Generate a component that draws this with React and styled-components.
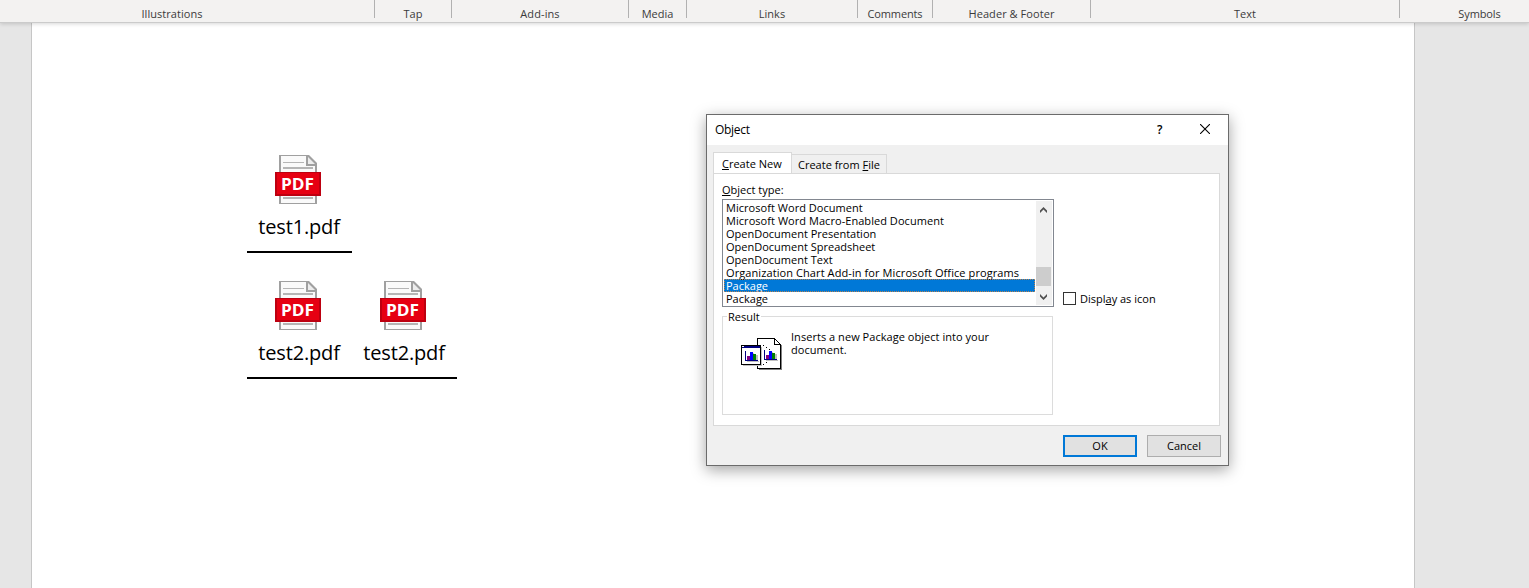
import styled, { createGlobalStyle } from 'styled-components';

const GlobalStyle = createGlobalStyle`
    * {
        box-sizing: border-box;
    }

    body {
        margin: 0;
        overflow: hidden;
        font-family: 'Open Sans', 'Noto Sans', sans-serif;
        font-size: 11px;
        color: #000;
    }
`;

const Window = styled.div`
    position: relative;
    display: flex;
    flex-direction: column;
    width: 100%;
    height: 100vh;
    overflow: hidden;
    background: #e6e6e6;
`;

/* ---------- ribbon ---------- */

const Ribbon = styled.header`
    position: relative;
    z-index: 1;
    display: flex;
    flex: none;
    height: 23px;
    background: #f3f2f1;
    border-bottom: 1px solid #cbcbcb;
    box-shadow: 0 1px 4px rgba(0, 0, 0, 0.16);
`;

const Group = styled.div`
    flex: none;
    width: ${({ $width }) => $width}px;
    height: 18px;
    padding-right: ${({ $inset = 0 }) => $inset}px;
    border-right: 1px solid #b1b1b1;
    color: #3b3b3b;
    line-height: 28px;
    text-align: center;
    white-space: nowrap;
    letter-spacing: ${({ $spacing = 0 }) => $spacing}px;
`;

/* ---------- document ---------- */

const Page = styled.main`
    flex: 1;
    width: 1384px;
    margin-left: 31px;
    padding: 124px 0 0 215px;
    background: #fff;
    border: solid #c6c6c6;
    border-width: 0 1px;
`;

const FileRow = styled.div`
    display: flex;
    width: fit-content;
    height: 106px;
    margin-bottom: 20px;
    border-bottom: 2px solid #000;
`;

const File = styled.figure`
    display: flex;
    flex-direction: column;
    align-items: center;
    width: 105px;
    margin: 0;
    padding: 8px 3px 0 0;
`;

const FileName = styled.figcaption`
    margin: 9px -2px 0 0;
    font-size: 20px;
    line-height: 28px;
    letter-spacing: -0.15px;
`;

const BandText = styled.text`
    fill: #fff;
    font: 700 16px 'Open Sans', sans-serif;
`;

/* ---------- dialog ---------- */

const Dialog = styled.section`
    position: absolute;
    z-index: 2;
    top: 114px;
    left: 706px;
    display: flex;
    flex-direction: column;
    width: 523px;
    height: 352px;
    background: #f0f0f0;
    border: 1px solid #6b6b6b;
    box-shadow: 0 4px 14px rgba(0, 0, 0, 0.36);
`;

const TitleBar = styled.div`
    display: flex;
    align-items: center;
    height: 30px;
    padding: 0 18px 2px 8px;
    background: #fff;
    font-size: 12px;
`;

const Title = styled.span`
    flex: 1;
    letter-spacing: -0.3px;
`;

const Help = styled.span`
    width: 6px;
    margin-right: 37px;
    font-weight: 600;
`;

const Tabs = styled.div`
    display: flex;
    align-items: flex-end;
    height: 28px;
    margin-left: 6px;
`;

const Tab = styled.div`
    width: ${({ $active }) => ($active ? 79 : 95)}px;
    height: ${({ $active }) => ($active ? 22 : 19)}px;
    margin-bottom: ${({ $active }) => ($active ? -1 : 0)}px;
    padding-left: ${({ $active }) => ($active ? 8 : 6)}px;
    background: ${({ $active }) => ($active ? '#fff' : '#f0f0f0')};
    border: 1px solid #d9d9d9;
    border-width: ${({ $active }) => ($active ? '1px 1px 0' : '1px 1px 0 0')};
    line-height: ${({ $active }) => ($active ? 22 : 20)}px;
    white-space: nowrap;
`;

const Panel = styled.div`
    display: flex;
    width: 507px;
    height: 253px;
    margin-left: 6px;
    padding: 9px 0 0 8px;
    background: #fff;
    border: 1px solid #d9d9d9;
`;

const Column = styled.div`
    width: 332px;
`;

const Line = styled.div`
    height: 16px;
    line-height: 14px;
`;

const ListBox = styled.div`
    display: flex;
    height: 108px;
    padding: 1px;
    border: 1px solid #828790;
`;

const Options = styled.ul`
    width: 311px;
    margin: 0;
    padding: 0;
    list-style: none;
`;

const Option = styled.li`
    height: 13px;
    padding-left: 2px;
    line-height: 14px;
    white-space: nowrap;
    letter-spacing: ${({ $spacing = 0 }) => $spacing}px;
    color: ${({ $selected }) => ($selected ? '#fff' : '#000')};
    background: ${({ $selected }) => ($selected ? '#0078d7' : 'transparent')};
    outline: ${({ $selected }) => ($selected ? '1px dotted #b9824f' : 'none')};
    outline-offset: -1px;
`;

const ScrollBar = styled.div`
    display: flex;
    flex-direction: column;
    justify-content: space-between;
    width: 16px;
    margin-left: 1px;
    padding: 6px 0 5px;
    background: #f0f0f0;
`;

const Thumb = styled.div`
    width: 15px;
    height: 19px;
    margin: 54px 0 8px;
    background: #cdcdcd;
`;

const Result = styled.fieldset`
    display: flex;
    width: 331px;
    height: 105px;
    margin: 3px 0 0;
    padding: 8px 0 0 18px;
    border: 1px solid #dcdcdc;

    svg {
        margin-top: 8px;
    }
`;

const Legend = styled.legend`
    height: 12px;
    margin-left: -14px;
    padding: 0 1px 0 1px;
    line-height: 14px;
`;

const Description = styled.p`
    width: 210px;
    margin: 0 0 0 9px;
    line-height: 13px;
    letter-spacing: 0.04px;
`;

const Check = styled.label`
    display: flex;
    align-items: center;
    height: 13px;
    margin: 109px 0 0 9px;
    white-space: nowrap;
`;

const Box = styled.span`
    width: 13px;
    height: 13px;
    margin-right: 4px;
    border: 1px solid #333;
`;

const Footer = styled.div`
    display: flex;
    justify-content: flex-end;
    gap: 10px;
    padding: 9px 7px 0 0;
`;

const Button = styled.button`
    width: 74px;
    height: 22px;
    padding: 0 0 1px;
    background: #e1e1e1;
    border: ${({ $primary }) => ($primary ? '2px solid #0078d7' : '1px solid #adadad')};
    font: inherit;
    color: inherit;
`;

const Key = styled.span`
    text-decoration: underline;
    text-decoration-thickness: 1px;
    text-underline-offset: 1px;
    text-decoration-skip-ink: none;
`;

const PdfIcon = () => (
    <svg width='46' height='49' viewBox='0 0 46 49'>
        <path d='M5 1H32L41 10V48H5Z' fill='#fafafa' />
        <path d='M4 0H33V1H6V48H40V10H42V49H4Z' fill='#a0a0a0' />
        <path d='M31 0H34L42 8V11H31Z' fill='#a0a0a0' />
        <path d='M33 2L40 9H33Z' fill='#ededed' />
        <path d='M8 7H29V8H8Z' fill='#b5b5b5' />
        <path d='M8 12H38V14H8ZM8 42H38V44H8Z' fill='#b5b5b5' />
        <rect y='17' width='46' height='24' fill='#bd0010' />
        <rect x='2' y='18' width='42' height='21' fill='#e60012' />
        <BandText x='6' y='35' textLength='33' lengthAdjust='spacingAndGlyphs'>
            PDF
        </BandText>
    </svg>
);

const Chart = ({ x, y }) => (
    <g transform={`translate(${x} ${y})`}>
        <path d='M2 5H5V2H9V4H13V10H14V11H2Z' fill='#c0c0c0' />
        <path d='M0 0H1V9H13V10H0Z' fill='#000080' />
        <rect x='2' y='5' width='3' height='4' fill='#800080' />
        <rect x='5' y='1' width='3' height='8' fill='#0000ff' />
        <rect x='8' y='3' width='3' height='6' fill='#008000' />
    </g>
);

const PackageIcon = () => (
    <svg width='41' height='32' viewBox='0 0 41 32' shapeRendering='crispEdges'>
        <path d='M18 31H40V7H41V32H18Z' fill='#808080' />
        <path d='M16 0H34V1H35V2H36V3H37V4H38V5H39V6H40V31H16Z' fill='#000' />
        <path d='M17 1H33V7H39V30H17Z' fill='#fff' />
        <path d='M34 2V6H38V5H37V4H36V3H35V2Z' fill='#fff' />
        <path d='M0 7H20V27H0Z' fill='#000' />
        <path d='M1 10H19V26H1Z' fill='#fff' />
        <path d='M1 8H19V10H1Z' fill='#000080' />
        <path d='M1 8H3V9H1Z' fill='#fff' />
        <path d='M20 9H21V28H2V27H20Z' fill='#c0c0c0' />
        <path
            d='M22 7h1v1h-1zM25 9h1v1h-1zM28 11h1v1h-1zM28 22h1v1h-1zM25 24h1v1h-1zM22 26h1v1h-1z'
            fill='#000'
        />
        <Chart x={4} y={13} />
        <Chart x={23} y={12} />
    </svg>
);

const ArrowSvg = styled.svg`
    flex: none;
    margin-left: 4px;
`;

const Arrow = ({ down }) => (
    <ArrowSvg width='7' height='6' viewBox='0 0 7 6'>
        <path
            d={down ? 'M0 0L3.5 3.5L7 0V2.5L3.5 6L0 2.5Z' : 'M0 6L3.5 2.5L7 6V3.5L3.5 0L0 3.5Z'}
            fill='#505050'
        />
    </ArrowSvg>
);

const CloseIcon = () => (
    <svg width='10' height='10' viewBox='0 0 10 10'>
        <path d='M0 0L10 10M10 0L0 10' stroke='#000' strokeWidth='1.1' />
    </svg>
);

const groups = [
    { name: 'Illustrations', width: 375, inset: 30, spacing: 0.05 },
    { name: 'Tap', width: 77 },
    { name: 'Add-ins', width: 177, spacing: 0.1 },
    { name: 'Media', width: 58 },
    { name: 'Links', width: 171 },
    { name: 'Comments', width: 75, spacing: -0.15 },
    { name: 'Header & Footer', width: 158, spacing: 0.06 },
    { name: 'Text', width: 309 },
    { name: 'Symbols', width: 160, spacing: -0.1 },
];

const files = [['test1.pdf'], ['test2.pdf', 'test2.pdf']];

const types = [
    { name: 'Microsoft Word Document', spacing: 0.04 },
    { name: 'Microsoft Word Macro-Enabled Document', spacing: 0.05 },
    { name: 'OpenDocument Presentation' },
    { name: 'OpenDocument Spreadsheet' },
    { name: 'OpenDocument Text' },
    { name: 'Organization Chart Add-in for Microsoft Office programs', spacing: 0.09 },
    { name: 'Package', selected: true },
    { name: 'Package' },
];

const ObjectDialog = () => (
    <Dialog>
        <TitleBar>
            <Title>Object</Title>
            <Help>?</Help>
            <CloseIcon />
        </TitleBar>
        <Tabs>
            <Tab $active>
                <Key>C</Key>reate New
            </Tab>
            <Tab>
                Create from <Key>F</Key>ile
            </Tab>
        </Tabs>
        <Panel>
            <Column>
                <Line>
                    <Key>O</Key>bject type:
                </Line>
                <ListBox>
                    <Options>
                        {types.map(({ name, selected, spacing }, i) => (
                            <Option key={i} $selected={selected} $spacing={spacing}>
                                {name}
                            </Option>
                        ))}
                    </Options>
                    <ScrollBar>
                        <Arrow />
                        <Thumb />
                        <Arrow down />
                    </ScrollBar>
                </ListBox>
                <Result>
                    <Legend>Result</Legend>
                    <PackageIcon />
                    <Description>
                        Inserts a new Package object into your document.
                    </Description>
                </Result>
            </Column>
            <Check>
                <Box />
                <span>
                    Displ<Key>a</Key>y as icon
                </span>
            </Check>
        </Panel>
        <Footer>
            <Button $primary>OK</Button>
            <Button>Cancel</Button>
        </Footer>
    </Dialog>
);

const App = () => {
    return (
        <Window>
            <GlobalStyle />
            <Ribbon>
                {groups.map(({ name, width, inset, spacing }) => (
                    <Group key={name} $width={width} $inset={inset} $spacing={spacing}>
                        {name}
                    </Group>
                ))}
            </Ribbon>
            <Page>
                {files.map((row, i) => (
                    <FileRow key={i}>
                        {row.map((name, j) => (
                            <File key={j}>
                                <PdfIcon />
                                <FileName>{name}</FileName>
                            </File>
                        ))}
                    </FileRow>
                ))}
            </Page>
            <ObjectDialog />
        </Window>
    );
};

export default App;
